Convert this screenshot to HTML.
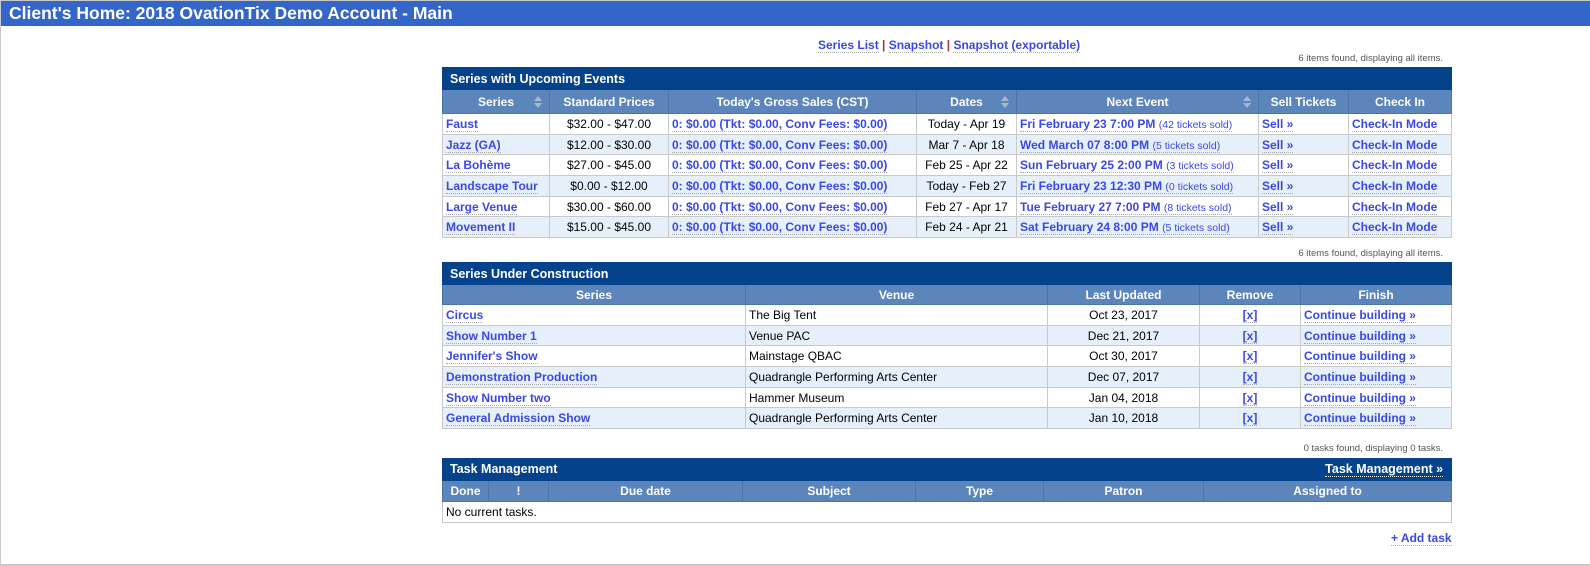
<!DOCTYPE html>
<html><head><meta charset="utf-8"><style>
*{box-sizing:border-box}
body{margin:0;width:1590px;height:566px;overflow:hidden;background:#fff;font-family:"Liberation Sans",Arial,sans-serif;font-size:12px;position:relative}
.frame{position:absolute;left:0;top:0;width:1590px;height:566px;border-left:1px solid #c8c8c8;border-top:1px solid #c8c8c8;border-bottom:2px solid #c8c8c8}
.top{position:absolute;left:1px;top:1px;width:1589px;height:25px;background:#3465c8;color:#fff;font-weight:bold;font-size:17.5px;line-height:25px;padding-left:8px}
a{color:#3a48e8;font-weight:bold;text-decoration:none;border-bottom:1px dotted #aaa}
.nav{position:absolute;top:38px;left:818px;font-weight:bold;color:#a33}
.cnt{position:absolute;font-size:9.5px;color:#555;right:147px}
table{position:absolute;left:442px;width:1009px;border-collapse:collapse;table-layout:fixed}
td,th{border:1px solid #c9c9c9;padding:0 3px;white-space:nowrap;overflow:hidden}
.ttl td{background:#04428c;color:#fff;font-weight:bold;font-size:12.5px;height:22px;padding-left:7px;border-color:#04428c}
th{background:#5b85bb;color:#fff;font-size:12px;border-color:#4c74a8;position:relative}
tr.r td{height:20.7px}
tr.alt td{background:#e6f0fb}
.c{text-align:center}
.s{font-weight:normal;font-size:10.5px}
.srt{position:absolute;right:7px;top:6px;width:8px;height:12px}
.srt:before{content:"";position:absolute;left:0;top:0;border:4px solid transparent;border-bottom:5px solid #a9b8cf;border-top:0}
.srt:after{content:"";position:absolute;left:0;top:7px;border:4px solid transparent;border-top:5px solid #a9b8cf;border-bottom:0}
</style></head><body>
<div class="frame"></div>
<div class="top">Client's Home: 2018 OvationTix Demo Account - Main</div>
<div class="nav"><a>Series List</a> | <a>Snapshot</a> | <a>Snapshot (exportable)</a></div>
<div class="cnt" style="top:53px">6 items found, displaying all items.</div>
<table style="top:67px">
<colgroup><col style="width:107px"><col style="width:119px"><col style="width:248px"><col style="width:100px"><col style="width:242px"><col style="width:90px"><col style="width:103px"></colgroup>
<tr class="ttl"><td colspan="7">Series with Upcoming Events</td></tr>
<tr><th style="height:24px">Series<span class="srt"></span></th><th>Standard Prices</th><th>Today's Gross Sales (CST)</th><th>Dates<span class="srt"></span></th><th>Next Event<span class="srt"></span></th><th>Sell Tickets</th><th>Check In</th></tr>
<tr class="r"><td><a>Faust</a></td><td class="c">$32.00 - $47.00</td><td><a>0: $0.00 (Tkt: $0.00, Conv Fees: $0.00)</a></td><td class="c">Today - Apr 19</td><td><a>Fri February 23 7:00 PM <span class="s">(42 tickets sold)</span></a></td><td><a>Sell »</a></td><td><a>Check-In Mode</a></td></tr>
<tr class="r alt"><td><a>Jazz (GA)</a></td><td class="c">$12.00 - $30.00</td><td><a>0: $0.00 (Tkt: $0.00, Conv Fees: $0.00)</a></td><td class="c">Mar 7 - Apr 18</td><td><a>Wed March 07 8:00 PM <span class="s">(5 tickets sold)</span></a></td><td><a>Sell »</a></td><td><a>Check-In Mode</a></td></tr>
<tr class="r"><td><a>La Bohème</a></td><td class="c">$27.00 - $45.00</td><td><a>0: $0.00 (Tkt: $0.00, Conv Fees: $0.00)</a></td><td class="c">Feb 25 - Apr 22</td><td><a>Sun February 25 2:00 PM <span class="s">(3 tickets sold)</span></a></td><td><a>Sell »</a></td><td><a>Check-In Mode</a></td></tr>
<tr class="r alt"><td><a>Landscape Tour</a></td><td class="c">$0.00 - $12.00</td><td><a>0: $0.00 (Tkt: $0.00, Conv Fees: $0.00)</a></td><td class="c">Today - Feb 27</td><td><a>Fri February 23 12:30 PM <span class="s">(0 tickets sold)</span></a></td><td><a>Sell »</a></td><td><a>Check-In Mode</a></td></tr>
<tr class="r"><td><a>Large Venue</a></td><td class="c">$30.00 - $60.00</td><td><a>0: $0.00 (Tkt: $0.00, Conv Fees: $0.00)</a></td><td class="c">Feb 27 - Apr 17</td><td><a>Tue February 27 7:00 PM <span class="s">(8 tickets sold)</span></a></td><td><a>Sell »</a></td><td><a>Check-In Mode</a></td></tr>
<tr class="r alt"><td><a>Movement II</a></td><td class="c">$15.00 - $45.00</td><td><a>0: $0.00 (Tkt: $0.00, Conv Fees: $0.00)</a></td><td class="c">Feb 24 - Apr 21</td><td><a>Sat February 24 8:00 PM <span class="s">(5 tickets sold)</span></a></td><td><a>Sell »</a></td><td><a>Check-In Mode</a></td></tr>
</table>
<div class="cnt" style="top:248px">6 items found, displaying all items.</div>
<table style="top:262px">
<colgroup><col style="width:303px"><col style="width:302px"><col style="width:152px"><col style="width:101px"><col style="width:151px"></colgroup>
<tr class="ttl"><td colspan="5">Series Under Construction</td></tr>
<tr><th style="height:20px">Series</th><th>Venue</th><th>Last Updated</th><th>Remove</th><th>Finish</th></tr>
<tr class="r"><td><a>Circus</a></td><td>The Big Tent</td><td class="c">Oct 23, 2017</td><td class="c"><a>[x]</a></td><td><a>Continue building »</a></td></tr>
<tr class="r alt"><td><a>Show Number 1</a></td><td>Venue PAC</td><td class="c">Dec 21, 2017</td><td class="c"><a>[x]</a></td><td><a>Continue building »</a></td></tr>
<tr class="r"><td><a>Jennifer's Show</a></td><td>Mainstage QBAC</td><td class="c">Oct 30, 2017</td><td class="c"><a>[x]</a></td><td><a>Continue building »</a></td></tr>
<tr class="r alt"><td><a>Demonstration Production</a></td><td>Quadrangle Performing Arts Center</td><td class="c">Dec 07, 2017</td><td class="c"><a>[x]</a></td><td><a>Continue building »</a></td></tr>
<tr class="r"><td><a>Show Number two</a></td><td>Hammer Museum</td><td class="c">Jan 04, 2018</td><td class="c"><a>[x]</a></td><td><a>Continue building »</a></td></tr>
<tr class="r alt"><td><a>General Admission Show</a></td><td>Quadrangle Performing Arts Center</td><td class="c">Jan 10, 2018</td><td class="c"><a>[x]</a></td><td><a>Continue building »</a></td></tr>
</table>
<div class="cnt" style="top:443px">0 tasks found, displaying 0 tasks.</div>
<table style="top:458px">
<colgroup><col style="width:46px"><col style="width:60px"><col style="width:194px"><col style="width:173px"><col style="width:128px"><col style="width:160px"><col style="width:248px"></colgroup>
<tr class="ttl"><td colspan="7">Task Management<a style="float:right;color:#fff;margin-right:5px;border-bottom-color:#fff">Task Management »</a></td></tr>
<tr><th style="height:21px">Done</th><th>!</th><th>Due date</th><th>Subject</th><th>Type</th><th>Patron</th><th>Assigned to</th></tr>
<tr class="r"><td colspan="7">No current tasks.</td></tr>
</table>
<div style="position:absolute;top:531px;left:1391px"><a>+ Add task</a></div>
</body></html>
